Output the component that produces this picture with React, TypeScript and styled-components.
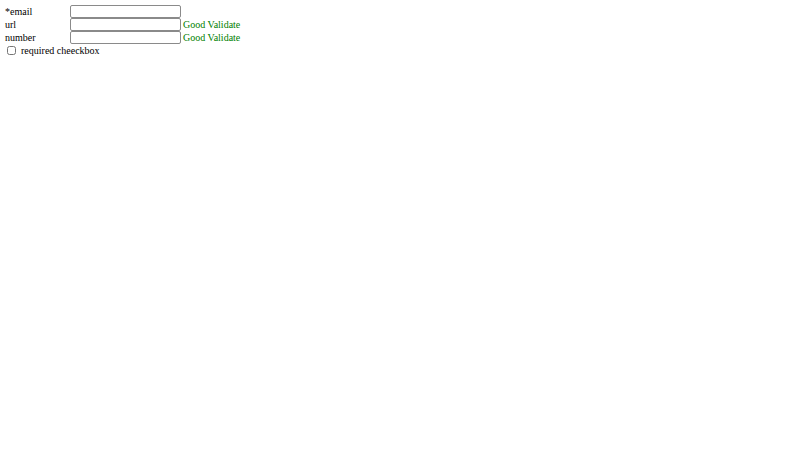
import React from "react";
import styled, { createGlobalStyle } from "styled-components";

const Global = createGlobalStyle`
  html, body { margin: 0; padding: 0; background: #fff; }
  body { font-family: "Liberation Serif", "Times New Roman", serif; font-size: 10px; color: #000; }
`;

const Form = styled.form`
  padding: 5px 0 0 5px;
  display: flex;
  flex-direction: column;
`;

const Row = styled.div`
  display: grid;
  grid-template-columns: 63px 111px auto;
  align-items: center;
  height: 13px;
  column-gap: 2px;
`;

const Label = styled.label`
  line-height: 13px;
  white-space: nowrap;
`;

const Input = styled.input`
  box-sizing: border-box;
  width: 111px;
  height: 13px;
  margin: 0;
  padding: 0 2px;
  border: 1px solid #8a8a8a;
  border-radius: 2px;
  font: inherit;
  font-size: 9px;
  background: #fff;
`;

const Message = styled.span`
  color: #008000;
  line-height: 13px;
  white-space: nowrap;
`;

const CheckRow = styled.label`
  display: flex;
  align-items: center;
  gap: 5px;
  height: 13px;
  padding-left: 2px;
  line-height: 13px;
`;

const Check = styled.input`
  box-sizing: border-box;
  width: 9px;
  height: 9px;
  margin: 0;
`;

export default function App() {
  return (
    <>
      <Global />
      <Form onSubmit={(e) => e.preventDefault()}>
        <Row>
          <Label>*email</Label>
          <Input type="text" />
          <Message />
        </Row>
        <Row>
          <Label>url</Label>
          <Input type="text" />
          <Message>Good Validate</Message>
        </Row>
        <Row>
          <Label>number</Label>
          <Input type="text" />
          <Message>Good Validate</Message>
        </Row>
        <CheckRow>
          <Check type="checkbox" />
          <span>required cheeckbox</span>
        </CheckRow>
      </Form>
    </>
  );
}
